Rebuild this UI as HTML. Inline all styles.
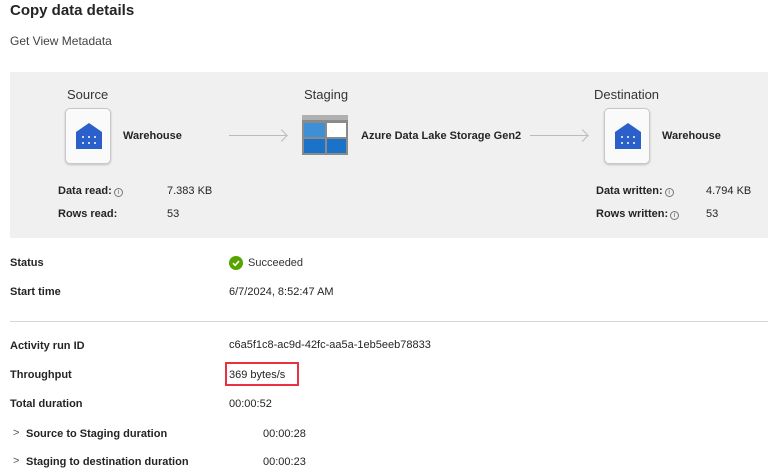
<!DOCTYPE html>
<html><head><style>
*{margin:0;padding:0;box-sizing:border-box}
body{width:768px;height:473px;background:#fff;font-family:"Liberation Sans",sans-serif;color:#242424;position:relative;overflow:hidden}
.a{position:absolute;white-space:nowrap}
.t{font-size:15px;font-weight:bold}
.s{font-size:12px;color:#424242}
.b{font-size:11px;font-weight:bold}
.n{font-size:11px}
.h{font-size:13px;color:#333}
.i{display:inline-block;width:9px;height:9px;border:1px solid #777;border-radius:50%;font-size:7px;line-height:7px;text-align:center;font-weight:normal;color:#666;vertical-align:0;margin-left:2px}
.panel{position:absolute;left:10px;top:72px;width:758px;height:166px;background:#f0f0f0}
.ic{position:absolute;width:46px;height:56px;background:#fafafa;border:1px solid #c8c8c8;border-radius:5px;box-shadow:0 1px 2px rgba(0,0,0,.2)}
.arr{position:absolute;height:1px;background:#bbb}
.arr:after{content:"";position:absolute;right:0;top:-4px;width:8px;height:8px;border-top:1px solid #bbb;border-right:1px solid #bbb;transform:rotate(45deg)}
</style></head><body>
<div class="a t" style="left:10px;top:2px">Copy data details</div>
<div class="a s" style="left:10px;top:34px">Get View Metadata</div>
<div class="panel"></div>
<div class="a h" style="left:67px;top:87px">Source</div>
<div class="a h" style="left:304px;top:87px">Staging</div>
<div class="a h" style="left:594px;top:87px">Destination</div>
<div class="ic" style="left:65px;top:108px"><svg width="46" height="56" viewBox="0 0 46 56"><path d="M10 23 L23 14 L36 23 V40 H10Z" fill="#2b5fc9"/><g fill="#fff"><circle cx="17" cy="28" r="1"/><circle cx="23" cy="28" r="1"/><circle cx="29" cy="28" r="1"/><circle cx="17" cy="34" r="1"/><circle cx="23" cy="34" r="1"/><circle cx="29" cy="34" r="1"/></g></svg></div>
<div class="ic" style="left:604px;top:108px"><svg width="46" height="56" viewBox="0 0 46 56"><path d="M10 23 L23 14 L36 23 V40 H10Z" fill="#2b5fc9"/><g fill="#fff"><circle cx="17" cy="28" r="1"/><circle cx="23" cy="28" r="1"/><circle cx="29" cy="28" r="1"/><circle cx="17" cy="34" r="1"/><circle cx="23" cy="34" r="1"/><circle cx="29" cy="34" r="1"/></g></svg></div>
<div class="a b" style="left:123px;top:130px">Warehouse</div>
<div class="a b" style="left:662px;top:130px">Warehouse</div>
<div class="arr" style="left:229px;top:135px;width:57px"></div>
<div class="arr" style="left:530px;top:135px;width:57px"></div>
<svg class="a" style="left:302px;top:115px" width="46" height="40"><rect width="46" height="40" fill="#8a8a8a"/><rect x="0" y="0" width="46" height="5" fill="#b0b0b0"/><rect x="2" y="8" width="21" height="14" fill="#3d8fd6"/><rect x="25" y="8" width="19" height="14" fill="#fff"/><rect x="2" y="24" width="21" height="14" fill="#1a73c9"/><rect x="25" y="24" width="19" height="14" fill="#1a73c9"/></svg>
<div class="a b" style="left:361px;top:130px">Azure Data Lake Storage Gen2</div>
<div class="a b" style="left:58px;top:185px">Data read:<span class="i">i</span></div>
<div class="a n" style="left:167px;top:185px">7.383 KB</div>
<div class="a b" style="left:58px;top:208px">Rows read:</div>
<div class="a n" style="left:167px;top:208px">53</div>
<div class="a b" style="left:596px;top:185px">Data written:<span class="i">i</span></div>
<div class="a n" style="left:706px;top:185px">4.794 KB</div>
<div class="a b" style="left:596px;top:208px">Rows written:<span class="i">i</span></div>
<div class="a n" style="left:706px;top:208px">53</div>
<div class="a b" style="left:10px;top:257px">Status</div>
<svg class="a" style="left:229px;top:256px" width="14" height="14"><circle cx="7" cy="7" r="7" fill="#57a300"/><path d="M4 7.2 L6.2 9.3 L10 5" stroke="#fff" stroke-width="1.6" fill="none"/></svg>
<div class="a n" style="left:248px;top:257px;color:#333">Succeeded</div>
<div class="a b" style="left:10px;top:286px">Start time</div>
<div class="a n" style="left:229px;top:286px">6/7/2024, 8:52:47 AM</div>
<div class="a" style="left:10px;top:321px;width:758px;height:1px;background:#d6d6d6"></div>
<div class="a b" style="left:10px;top:340px">Activity run ID</div>
<div class="a n" style="left:229px;top:339px">c6a5f1c8-ac9d-42fc-aa5a-1eb5eeb78833</div>
<div class="a b" style="left:10px;top:369px">Throughput</div>
<div class="a" style="left:225px;top:362px;width:74px;height:24px;border:2px solid #e8323f"></div>
<div class="a n" style="left:229px;top:369px">369 bytes/s</div>
<div class="a b" style="left:10px;top:398px">Total duration</div>
<div class="a n" style="left:229px;top:398px">00:00:52</div>
<div class="a n" style="left:13px;top:427px;color:#555">&gt;</div>
<div class="a b" style="left:26px;top:428px">Source to Staging duration</div>
<div class="a n" style="left:263px;top:428px">00:00:28</div>
<div class="a n" style="left:13px;top:455px;color:#555">&gt;</div>
<div class="a b" style="left:26px;top:456px">Staging to destination duration</div>
<div class="a n" style="left:263px;top:456px">00:00:23</div>
</body></html>
